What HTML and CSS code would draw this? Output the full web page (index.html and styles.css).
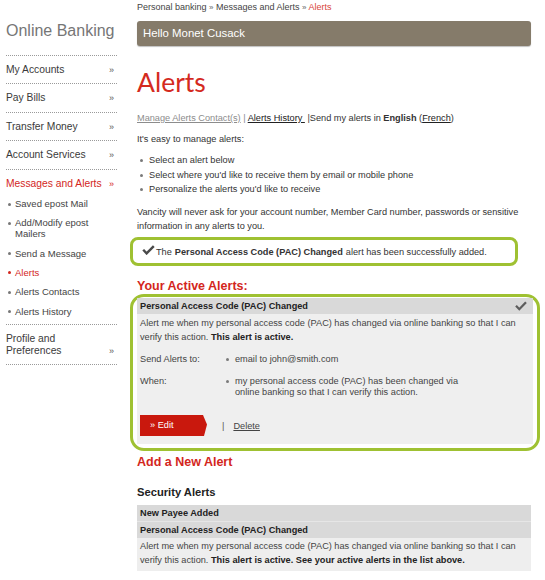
FILE: index.html
```html
<!DOCTYPE html>
<html lang="en">
<head>
<meta charset="utf-8">
<title>Alerts</title>
<link rel="stylesheet" href="styles.css">
</head>
<body>
<div class="page">
  <aside class="sidebar">
    <div class="brand">Online Banking</div>
    <ul class="nav">
      <li class="nav-item"><div class="nav-row"><span>My Accounts</span><span class="raquo">»</span></div></li>
      <li class="nav-item"><div class="nav-row"><span>Pay Bills</span><span class="raquo">»</span></div></li>
      <li class="nav-item"><div class="nav-row"><span>Transfer Money</span><span class="raquo">»</span></div></li>
      <li class="nav-item"><div class="nav-row"><span>Account Services</span><span class="raquo">»</span></div></li>
      <li class="nav-item current">
        <div class="nav-row"><span>Messages and Alerts</span><span class="raquo">»</span></div>
        <ul class="subnav">
          <li>Saved epost Mail</li>
          <li>Add/Modify epost<br>Mailers</li>
          <li>Send a Message</li>
          <li class="on">Alerts</li>
          <li>Alerts Contacts</li>
          <li>Alerts History</li>
        </ul>
      </li>
      <li class="nav-item tall"><div class="nav-row"><span>Profile and<br>Preferences</span><span class="raquo">»</span></div></li>
    </ul>
  </aside>

  <main class="main">
    <div class="crumbs">Personal banking <span class="sep">»</span> Messages and Alerts <span class="sep">»</span> <span class="cur">Alerts</span></div>
    <div class="hello">Hello Monet Cusack</div>
    <h1 class="title">Alerts</h1>
    <p class="links"><a class="muted-link">Manage Alerts Contact(s)</a> <span class="bar">|</span> <a class="dark-link">Alerts History&nbsp;</a> |Send my alerts in <b>English</b> (<a class="dark-link">French</a>)</p>
    <p class="intro">It's easy to manage alerts:</p>
    <ul class="steps">
      <li>Select an alert below</li>
      <li>Select where you'd like to receive them by email or mobile phone</li>
      <li>Personalize the alerts you'd like to receive</li>
    </ul>
    <p class="notice">Vancity will never ask for your account number, Member Card number, passwords or sensitive<br>information in any alerts to you.</p>

    <div class="success"><svg class="tick" width="13" height="10" viewBox="0 0 13 10"><path d="M1.2 4.8 L4.6 8.4 L11.8 1.2" fill="none" stroke="#4a4a4a" stroke-width="2.4" stroke-linejoin="miter"/></svg>The <b>Personal Access Code (PAC) Changed</b> alert has been successfully added.</div>

    <h2 class="section">Your Active Alerts:</h2>
    <div class="active-box">
      <div class="alert-head"><span>Personal Access Code (PAC) Changed</span><svg class="head-tick" width="12" height="10" viewBox="0 0 12 10"><path d="M1 4.8 L4.3 8.2 L11 1.3" fill="none" stroke="#5d5d5d" stroke-width="2.3"/></svg></div>
      <div class="alert-body">
        <p class="alert-desc">Alert me when my personal access code (PAC) has changed via online banking so that I can<br>verify this action. <b>This alert is active.</b></p>
        <div class="detail send"><span class="label">Send Alerts to:</span><ul class="values"><li>email to john@smith.com</li></ul></div>
        <div class="detail when"><span class="label">When:</span><ul class="values"><li>my personal access code (PAC) has been changed via<br>online banking so that I can verify this action.</li></ul></div>
        <div class="actions"><a class="edit-btn">» Edit</a><span class="pipe">|</span><a class="delete">Delete</a></div>
      </div>
    </div>

    <h2 class="section add">Add a New Alert</h2>
    <h3 class="group">Security Alerts</h3>
    <div class="alert-table">
      <div class="row-head">New Payee Added</div>
      <div class="row-head">Personal Access Code (PAC) Changed</div>
      <div class="row-desc">Alert me when my personal access code (PAC) has changed via online banking so that I can<br>verify this action. <b>This alert is active. See your active alerts in the list above.</b></div>
    </div>
  </main>
</div>
</body>
</html>
```

FILE: styles.css
```css
* { box-sizing: border-box; }

html, body {
  margin: 0;
  padding: 0;
  background: #ffffff;
}

body {
  font-family: "Liberation Sans", Arial, sans-serif;
  color: #333333;
  font-size: 9.2px;
}

.page {
  display: flex;
  gap: 20px;
  padding-left: 6px;
  width: 545px;
}

/* ---------- sidebar ---------- */
.sidebar {
  width: 111px;
  flex: none;
  padding-top: 20px;
}

.brand {
  font-size: 16px;
  line-height: 22px;
  color: #767676;
  margin-bottom: 13px;
}

.nav, .subnav, .steps, .values {
  list-style: none;
  margin: 0;
  padding: 0;
}

.nav {
  border-bottom: 1px dotted #9a9a9a;
}

.nav-item {
  border-top: 1px dotted #9a9a9a;
  font-size: 10.3px;
  color: #3a3a3a;
}

.nav-row {
  display: flex;
  justify-content: space-between;
  align-items: flex-end;
  line-height: 14px;
  padding: 7px 3px 6.4px 0;
}

.raquo {
  font-size: 9px;
  color: #555;
}

.current > .nav-row {
  color: #d3261d;
  padding-bottom: 0;
}

.current > .nav-row .raquo { color: #d3261d; }

.subnav {
  margin: 3.5px 0 2.7px;
}

.subnav li {
  display: flex;
  align-items: flex-start;
  gap: 4px;
  padding: 4px 0 4.3px 2px;
  font-size: 9.5px;
  line-height: 11px;
  color: #444;
}

.subnav li::before {
  content: "";
  flex: none;
  width: 3px;
  height: 3px;
  border-radius: 50%;
  background: #777;
  margin-top: 4.5px;
}

.subnav li.on { color: #d3261d; }
.subnav li.on::before { background: #d3261d; }

.tall .nav-row {
  line-height: 12px;
  padding: 8px 3px 7px 0;
}

/* ---------- main ---------- */
.main {
  width: 394px;
  flex: none;
}

.crumbs {
  margin-top: 1px;
  font-size: 9px;
  line-height: 12px;
  color: #444;
}

.crumbs .sep { font-size: 8px; color: #666; }
.crumbs .cur { color: #d9443a; }

.hello {
  margin-top: 7px;
  height: 25px;
  line-height: 25px;
  background: #857b6a;
  color: #ffffff;
  font-size: 11.4px;
  padding-left: 6px;
  border-radius: 3px;
  box-shadow: 0 1px 1px rgba(0, 0, 0, 0.25);
}

.title {
  margin: 19.5px 0 0;
  font-family: Lato, "Open Sans", sans-serif;
  font-weight: 400;
  font-size: 26.5px;
  line-height: 32px;
  color: #d42a1e;
}

p { margin: 0; }

.links {
  margin-top: 13.5px;
  line-height: 14px;
  color: #333;
}

.muted-link {
  color: #8c8c8c;
  text-decoration: underline;
}

.links .bar { color: #888; }

.dark-link {
  color: #222;
  text-decoration: underline;
}

.intro {
  margin-top: 7px;
  line-height: 14px;
}

.steps {
  margin-top: 7px;
}

.steps li {
  display: flex;
  align-items: flex-start;
  gap: 6px;
  line-height: 14.5px;
  padding-left: 3px;
}

.steps li::before,
.values li::before {
  content: "";
  flex: none;
  width: 3px;
  height: 3px;
  border-radius: 50%;
  background: #7a7a7a;
  margin-top: 6px;
}

.notice {
  margin-top: 8.5px;
  line-height: 14px;
}

.success {
  margin: 4px 0 0 -7px;
  width: 388px;
  border: 3px solid #9fc132;
  border-radius: 8px;
  padding: 5px 6px 4px 9px;
  line-height: 14px;
  display: flex;
  align-items: flex-start;
  white-space: nowrap;
}

.success b { margin: 0 3px; }

.tick {
  flex: none;
  margin-top: 0;
  margin-right: 1px;
}

.section {
  margin: 12px 0 0;
  font-size: 12.5px;
  line-height: 16px;
  font-weight: bold;
  color: #d3261d;
}

.active-box {
  margin: 0 -9px 0 -7px;
  border: 3px solid #9fc132;
  border-radius: 14px;
  padding: 1px 4px 4px;
  background: #ffffff;
}

.alert-head {
  display: flex;
  justify-content: space-between;
  align-items: center;
  height: 16px;
  line-height: 16px;
  padding: 0 6px 0 3px;
  background: #d9d9d9;
  font-weight: bold;
  font-size: 9.2px;
  color: #222;
}

.alert-body {
  background: #efefef;
  padding: 2px 3px 8px;
  color: #444;
}

.alert-desc {
  line-height: 14px;
}

.alert-desc b { color: #222; }

.detail {
  display: flex;
}

.detail .label {
  width: 85px;
  flex: none;
}

.send {
  margin-top: 8px;
  line-height: 14px;
}

.when {
  margin-top: 9.5px;
  line-height: 11px;
}

.values li {
  display: flex;
  align-items: flex-start;
  gap: 6px;
  padding-left: 1px;
}

.when .values li::before { margin-top: 4px; }

.actions {
  margin-top: 17.5px;
  display: flex;
  align-items: center;
  height: 21px;
}

.edit-btn {
  display: block;
  width: 67px;
  height: 21px;
  line-height: 21px;
  padding-left: 10px;
  background: #c9180d;
  color: #ffffff;
  clip-path: polygon(0 0, 63px 0, 67px 45%, 64px 100%, 0 100%);
}

.pipe {
  margin-left: 15px;
  color: #555;
}

.delete {
  margin-left: 9px;
  color: #444;
  text-decoration: underline;
}

.section.add {
  margin-top: 3px;
}

.group {
  margin: 15px 0 0;
  font-size: 11.2px;
  line-height: 14px;
  font-weight: bold;
  color: #222;
}

.alert-table {
  margin-top: 6px;
}

.row-head {
  height: 16px;
  line-height: 16px;
  padding-left: 3px;
  background: #d9d9d9;
  font-weight: bold;
  font-size: 9.2px;
  color: #222;
}

.row-head + .row-head {
  border-top: 1px solid #e6e6e6;
  height: 17px;
}

.row-desc {
  background: #eeeeee;
  padding: 1px 3px 4px;
  line-height: 14px;
  color: #444;
}

.row-desc b { color: #222; }
```
